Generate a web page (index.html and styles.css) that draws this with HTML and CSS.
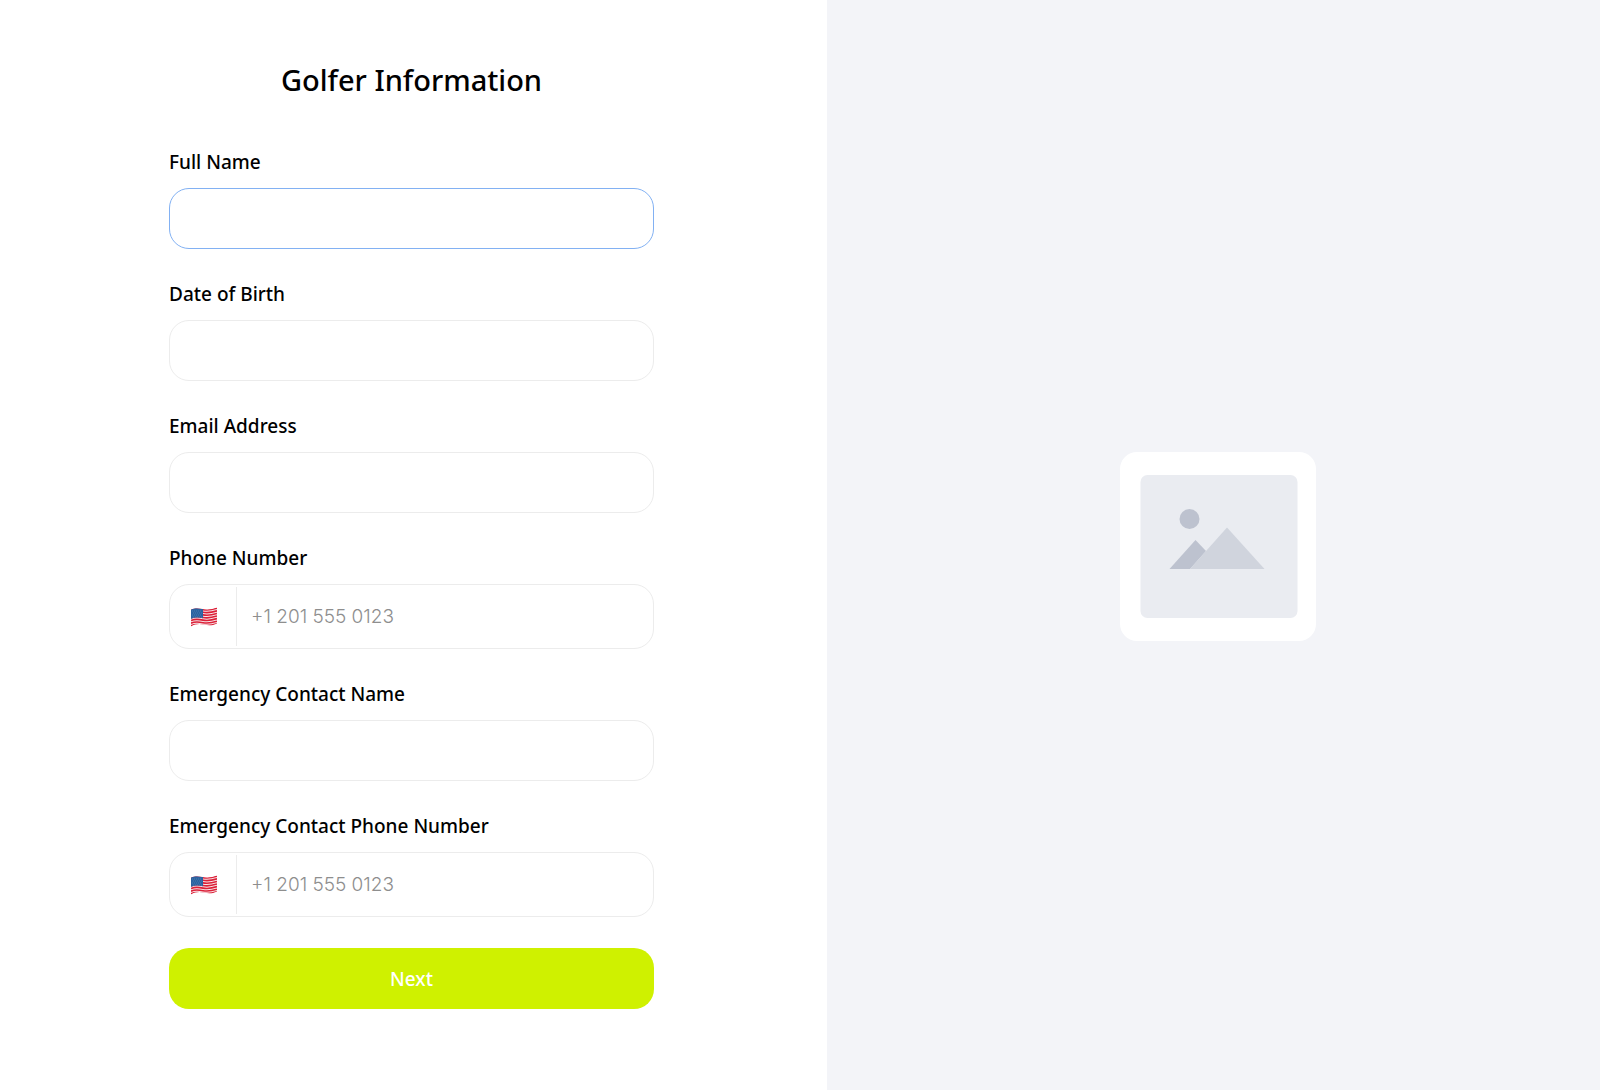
FILE: index.html
```html
<!DOCTYPE html>
<html lang="en">
<head>
    <meta charset="UTF-8">
    <meta name="viewport" content="width=device-width, initial-scale=1.0">
    <title>Golfer Information</title>
    <link rel="stylesheet" href="styles.css">
</head>
<body>
    <!-- Flag shared by both phone fields -->
    <svg class="symbols" aria-hidden="true">
        <symbol id="flag-us" viewBox="0 0 28 22">
            <clipPath id="flag-shape">
                <path d="M1 3.5C5 1.5 9 2.2 13 3C18 4 22 3.200 27 1.500V17.500C22 20 18 19.500 14 18.600C9 17.500 5 18 1 20.500Z"/>
            </clipPath>
            <g clip-path="url(#flag-shape)">
                <rect width="28" height="22" fill="#f7e6e8"/>
                <g fill="none" stroke="#dc2038" stroke-width="1.6">
                    <path d="M1 4.200C5 2.200 9 2.900 13 3.700C18 4.700 22 3.900 27 2.200"/>
                    <path d="M1 6.800C5 4.800 9 5.500 13 6.300C18 7.300 22 6.500 27 4.800"/>
                    <path d="M1 9.400C5 7.400 9 8.100 13 8.900C18 9.900 22 9.100 27 7.400"/>
                    <path d="M1 12C5 10 9 10.700 13 11.500C18 12.500 22 11.700 27 10"/>
                    <path d="M1 14.600C5 12.600 9 13.300 13 14.100C18 15.100 22 14.300 27 12.600"/>
                    <path d="M1 17.200C5 15.200 9 15.900 13 16.700C18 17.700 22 16.900 27 15.200"/>
                    <path d="M1 19.800C5 17.800 9 18.500 13 19.300C18 20.300 22 19.500 27 17.800"/>
                </g>
                <path d="M1 3.500C5 1.500 9 2.200 13 3V12.200C9 11.300 5 11 1 12.800Z" fill="#2b62a0"/>
                <g stroke="#6f97c2" stroke-width="0.700" stroke-dasharray="0.700 1.300">
                    <path d="M2 5H12M3 7H12M2 9H12M3 11H12"/>
                </g>
            </g>
        </symbol>
    </svg>

    <div class="page">
        <main class="form-panel">
            <form class="golfer-form">
                <h1>Golfer Information</h1>

                <div class="field">
                    <label for="full-name">Full Name</label>
                    <input type="text" id="full-name" class="text-input active">
                </div>

                <div class="field">
                    <label for="birth-date">Date of Birth</label>
                    <input type="text" id="birth-date" class="text-input">
                </div>

                <div class="field">
                    <label for="email">Email Address</label>
                    <input type="email" id="email" class="text-input">
                </div>

                <div class="field">
                    <label for="phone">Phone Number</label>
                    <div class="phone-input">
                        <button type="button" class="country-button" aria-label="Country">
                            <svg class="flag"><use href="#flag-us"/></svg>
                        </button>
                        <input type="tel" id="phone" placeholder="+1 201 555 0123">
                    </div>
                </div>

                <div class="field">
                    <label for="emergency-name">Emergency Contact Name</label>
                    <input type="text" id="emergency-name" class="text-input">
                </div>

                <div class="field">
                    <label for="emergency-phone">Emergency Contact Phone Number</label>
                    <div class="phone-input">
                        <button type="button" class="country-button" aria-label="Country">
                            <svg class="flag"><use href="#flag-us"/></svg>
                        </button>
                        <input type="tel" id="emergency-phone" placeholder="+1 201 555 0123">
                    </div>
                </div>

                <button type="submit" class="next-button">Next</button>
            </form>
        </main>

        <aside class="image-panel">
            <svg class="placeholder-image" viewBox="0 0 196 189" aria-hidden="true">
                <rect width="196" height="189" rx="17" fill="#ffffff"/>
                <rect x="20.500" y="23" width="157" height="143" rx="7" fill="#eaecf1"/>
                <circle cx="69.500" cy="67" r="10" fill="#bdc2cf"/>
                <path d="M49.500 117L75.500 88L86 99L70 117Z" fill="#bdc2cf"/>
                <path d="M70 117L107 75.500L144.500 117Z" fill="#d0d4dd"/>
            </svg>
        </aside>
    </div>
</body>
</html>
```
FILE: styles.css
```css
* {
    box-sizing: border-box;
    margin: 0;
    padding: 0;
}

body {
    font-family: "Noto Sans", "Open Sans", sans-serif;
    font-size: 19px;
    color: #000;
    background: #fff;
}

.symbols {
    position: absolute;
    width: 0;
    height: 0;
}

.page {
    display: grid;
    grid-template-columns: 827fr 773fr;
    min-height: 100vh;
}

.form-panel {
    display: flex;
    justify-content: center;
    align-items: flex-start;
    padding: 60px 4px 60px 0;
}

.golfer-form {
    display: flex;
    flex-direction: column;
    gap: 31px;
    width: 100%;
    max-width: 485px;
}

h1 {
    font-size: 29px;
    line-height: 40px;
    font-weight: 500;
    text-align: center;
    margin-bottom: 17px;
}

.field {
    display: flex;
    flex-direction: column;
    gap: 12px;
}

label {
    font-weight: 500;
    line-height: 28px;
}

.text-input,
.phone-input {
    width: 100%;
    border: 1px solid #ececec;
    border-radius: 20px;
    background: #fff;
}

.text-input {
    height: 61px;
    padding: 0 20px;
    font: inherit;
    outline: none;
}

.text-input.active,
.text-input:focus {
    border-color: #82b1f3;
}

.phone-input {
    display: flex;
    height: 65px;
    padding: 2px 0;
}

.country-button {
    display: flex;
    align-items: center;
    justify-content: center;
    width: 67px;
    padding-left: 2px;
    border: none;
    border-right: 1px solid #ececec;
    border-radius: 20px 0 0 20px;
    background: none;
    cursor: pointer;
}

.flag {
    width: 28px;
    height: 22px;
}

.phone-input input {
    flex: 1;
    min-width: 0;
    padding: 0 14px;
    border: none;
    border-radius: 0 20px 20px 0;
    outline: none;
    background: none;
    font-family: Inter, sans-serif;
    font-size: 19px;
    font-weight: 300;
}

.phone-input input::placeholder {
    color: #8e8e8e;
}

.next-button {
    height: 61px;
    border: none;
    border-radius: 20px;
    background: #cff100;
    color: #fff;
    font: inherit;
    font-weight: 500;
    cursor: pointer;
}

.image-panel {
    display: flex;
    justify-content: center;
    align-items: center;
    padding: 3px 0 0 8px;
    background: #f3f4f8;
}

.placeholder-image {
    width: 196px;
    height: 189px;
}

@media (max-width: 800px) {
    .page {
        grid-template-columns: 1fr;
    }

    .form-panel {
        padding: 40px 20px;
    }

    .image-panel {
        padding: 60px 0;
    }
}
```
